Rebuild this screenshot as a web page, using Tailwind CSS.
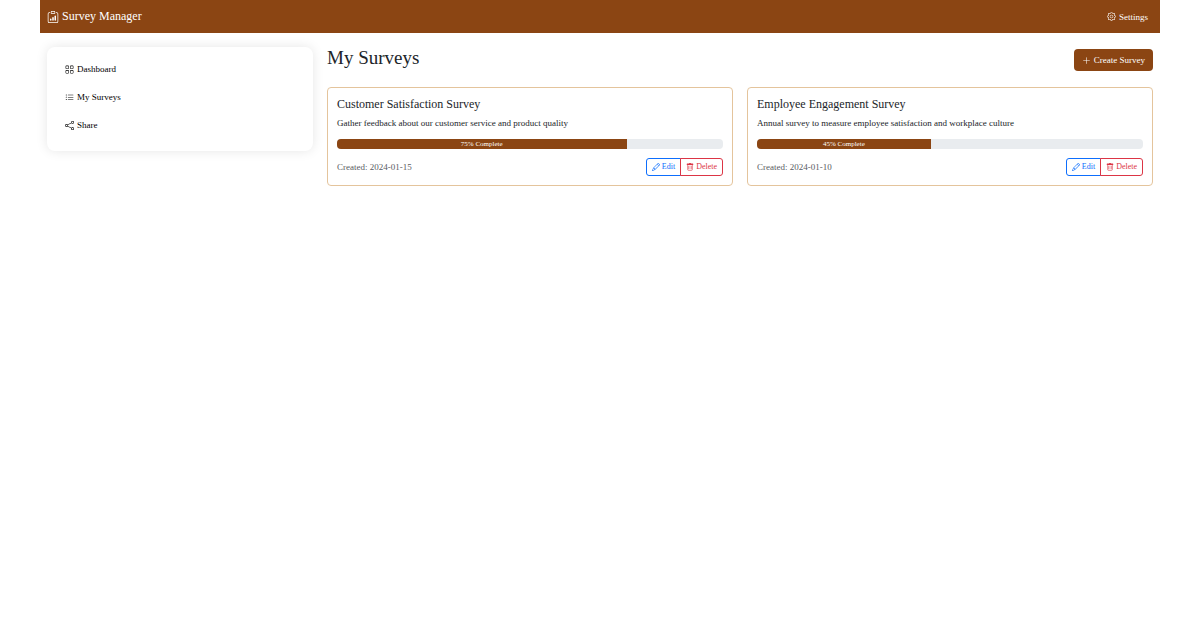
<!DOCTYPE html>
<html lang="en">
<head>
    <meta charset="UTF-8">
    <meta name="viewport" content="width=device-width, initial-scale=1.0">
    <title>Survey Manager</title>
    <script src="https://cdn.jsdelivr.net/npm/@tailwindcss/browser@4"></script>
</head>
<body class="bg-white text-[#212529] font-['Liberation_Serif',serif] text-[9px] leading-[14px]">
    <!-- Icon sprite -->
    <svg class="hidden" xmlns="http://www.w3.org/2000/svg">
        <symbol id="clipboard-data" viewBox="0 0 16 16">
            <path d="M4 11a1 1 0 1 1 2 0v1a1 1 0 1 1-2 0zm6-4a1 1 0 1 1 2 0v5a1 1 0 1 1-2 0zM7 9a1 1 0 0 1 2 0v3a1 1 0 1 1-2 0z"/>
            <path d="M4 1.500H3a2 2 0 0 0-2 2V14a2 2 0 0 0 2 2h10a2 2 0 0 0 2-2V3.500a2 2 0 0 0-2-2h-1v1h1a1 1 0 0 1 1 1V14a1 1 0 0 1-1 1H3a1 1 0 0 1-1-1V3.500a1 1 0 0 1 1-1h1z"/>
            <path d="M9.500 1a.5.5 0 0 1 .5.5v1a.5.5 0 0 1-.5.5h-3a.5.5 0 0 1-.5-.5v-1a.5.5 0 0 1 .5-.5zm-3-1A1.500 1.500 0 0 0 5 1.500v1A1.500 1.500 0 0 0 6.500 4h3A1.500 1.500 0 0 0 11 2.500v-1A1.500 1.500 0 0 0 9.500 0z"/>
        </symbol>
        <symbol id="gear" viewBox="0 0 16 16">
            <path d="M8 4.754a3.246 3.246 0 1 0 0 6.492 3.246 3.246 0 0 0 0-6.492M5.754 8a2.246 2.246 0 1 1 4.492 0 2.246 2.246 0 0 1-4.492 0"/>
            <path d="M9.796 1.343c-.527-1.790-3.065-1.790-3.592 0l-.094.319a.873.873 0 0 1-1.255.520l-.292-.160c-1.640-.892-3.433.902-2.540 2.541l.159.292a.873.873 0 0 1-.520 1.255l-.319.094c-1.790.527-1.790 3.065 0 3.592l.319.094a.873.873 0 0 1 .520 1.255l-.160.292c-.892 1.640.901 3.434 2.541 2.540l.292-.159a.873.873 0 0 1 1.255.520l.094.319c.527 1.790 3.065 1.790 3.592 0l.094-.319a.873.873 0 0 1 1.255-.520l.292.160c1.640.893 3.434-.902 2.540-2.541l-.159-.292a.873.873 0 0 1 .520-1.255l.319-.094c1.790-.527 1.790-3.065 0-3.592l-.319-.094a.873.873 0 0 1-.520-1.255l.160-.292c.893-1.640-.902-3.433-2.541-2.540l-.292.159a.873.873 0 0 1-1.255-.520zm-2.633.283c.246-.835 1.428-.835 1.674 0l.094.319a1.873 1.873 0 0 0 2.693 1.115l.291-.160c.764-.415 1.600.420 1.184 1.185l-.159.292a1.873 1.873 0 0 0 1.116 2.692l.318.094c.835.246.835 1.428 0 1.674l-.319.094a1.873 1.873 0 0 0-1.115 2.693l.160.291c.415.764-.420 1.600-1.185 1.184l-.291-.159a1.873 1.873 0 0 0-2.693 1.116l-.094.318c-.246.835-1.428.835-1.674 0l-.094-.319a1.873 1.873 0 0 0-2.692-1.115l-.292.160c-.764.415-1.600-.420-1.184-1.185l.159-.291A1.873 1.873 0 0 0 1.945 8.930l-.319-.094c-.835-.246-.835-1.428 0-1.674l.319-.094A1.873 1.873 0 0 0 3.060 4.377l-.160-.292c-.415-.764.420-1.600 1.185-1.184l.292.159a1.873 1.873 0 0 0 2.692-1.115z"/>
        </symbol>
        <symbol id="grid" viewBox="0 0 16 16">
            <path d="M1 2.500A1.500 1.500 0 0 1 2.500 1h3A1.500 1.500 0 0 1 7 2.500v3A1.500 1.500 0 0 1 5.500 7h-3A1.500 1.500 0 0 1 1 5.500zM2.500 2a.5.5 0 0 0-.5.5v3a.5.5 0 0 0 .5.5h3a.5.5 0 0 0 .5-.5v-3a.5.5 0 0 0-.5-.5zm6.500.5A1.500 1.500 0 0 1 10.500 1h3A1.500 1.500 0 0 1 15 2.500v3A1.500 1.500 0 0 1 13.500 7h-3A1.500 1.500 0 0 1 9 5.500zm1.500-.5a.5.5 0 0 0-.5.5v3a.5.5 0 0 0 .5.5h3a.5.5 0 0 0 .5-.5v-3a.5.5 0 0 0-.5-.5zM1 10.500A1.500 1.500 0 0 1 2.500 9h3A1.500 1.500 0 0 1 7 10.500v3A1.500 1.500 0 0 1 5.500 15h-3A1.500 1.500 0 0 1 1 13.500zm1.500-.5a.5.5 0 0 0-.5.5v3a.5.5 0 0 0 .5.5h3a.5.5 0 0 0 .5-.5v-3a.5.5 0 0 0-.5-.5zm6.500.5A1.500 1.500 0 0 1 10.500 9h3a1.500 1.500 0 0 1 1.500 1.500v3a1.500 1.500 0 0 1-1.500 1.500h-3A1.500 1.500 0 0 1 9 13.500zm1.500-.5a.5.5 0 0 0-.5.5v3a.5.5 0 0 0 .5.5h3a.5.5 0 0 0 .5-.5v-3a.5.5 0 0 0-.5-.5z"/>
        </symbol>
        <symbol id="list-task" viewBox="0 0 16 16">
            <path fill-rule="evenodd" d="M2 2.500a.5.5 0 0 0-.5.5v1a.5.5 0 0 0 .5.5h1a.5.5 0 0 0 .5-.5V3a.5.5 0 0 0-.5-.5zM3 3H2v1h1z"/>
            <path d="M5 3.500a.5.5 0 0 1 .5-.5h9a.5.5 0 0 1 0 1h-9a.5.5 0 0 1-.5-.5M5.500 7a.5.5 0 0 0 0 1h9a.5.5 0 0 0 0-1zm0 4a.5.5 0 0 0 0 1h9a.5.5 0 0 0 0-1z"/>
            <path fill-rule="evenodd" d="M1.500 7a.5.5 0 0 1 .5-.5h1a.5.5 0 0 1 .5.5v1a.5.5 0 0 1-.5.5H2a.5.5 0 0 1-.5-.5zM2 7h1v1H2zm0 3.500a.5.5 0 0 0-.5.5v1a.5.5 0 0 0 .5.5h1a.5.5 0 0 0 .5-.5v-1a.5.5 0 0 0-.5-.5zm1 .5H2v1h1z"/>
        </symbol>
        <symbol id="share" viewBox="0 0 16 16">
            <path d="M13.500 1a1.500 1.500 0 1 0 0 3 1.500 1.500 0 0 0 0-3M11 2.500a2.500 2.500 0 1 1 .603 1.628l-6.718 3.120a2.500 2.500 0 0 1 0 1.504l6.718 3.120a2.500 2.500 0 1 1-.488.876l-6.718-3.120a2.500 2.500 0 1 1 0-3.256l6.718-3.120A2.500 2.500 0 0 1 11 2.500m-8.500 4a1.500 1.500 0 1 0 0 3 1.500 1.500 0 0 0 0-3m11 5.500a1.500 1.500 0 1 0 0 3 1.500 1.500 0 0 0 0-3"/>
        </symbol>
        <symbol id="plus-lg" viewBox="0 0 16 16">
            <path d="M8 2a.5.5 0 0 1 .5.5v5h5a.5.5 0 0 1 0 1h-5v5a.5.5 0 0 1-1 0v-5h-5a.5.5 0 0 1 0-1h5v-5A.5.5 0 0 1 8 2"/>
        </symbol>
        <symbol id="pencil" viewBox="0 0 16 16">
            <path d="M12.146.146a.5.5 0 0 1 .708 0l3 3a.5.5 0 0 1 0 .708l-10 10a.5.5 0 0 1-.168.110l-5 2a.5.5 0 0 1-.650-.650l2-5a.5.5 0 0 1 .110-.168zM11.207 2.500 13.500 4.793 14.793 3.500 12.500 1.207zm1.586 3L10.500 3.207 4 9.707V10h.5a.5.5 0 0 1 .5.5v.5h.5a.5.5 0 0 1 .5.5v.5h.293zm-9.761 5.175-.106.106-1.528 3.821 3.821-1.528.106-.106A.5.5 0 0 1 5 12.500V12h-.5a.5.5 0 0 1-.5-.5V11h-.5a.5.5 0 0 1-.468-.325"/>
        </symbol>
        <symbol id="trash" viewBox="0 0 16 16">
            <path d="M2.500 1a1 1 0 0 0-1 1v1a1 1 0 0 0 1 1H3v9a2 2 0 0 0 2 2h6a2 2 0 0 0 2-2V4h.5a1 1 0 0 0 1-1V2a1 1 0 0 0-1-1H10a1 1 0 0 0-1-1H7a1 1 0 0 0-1 1zM4 4h8v9a1 1 0 0 1-1 1H5a1 1 0 0 1-1-1z" fill-rule="evenodd"/>
            <path d="M5.500 5a.5.5 0 0 1 .5.5v7a.5.5 0 0 1-1 0v-7a.5.5 0 0 1 .5-.5M8 5a.5.5 0 0 1 .5.5v7a.5.5 0 0 1-1 0v-7A.5.5 0 0 1 8 5m3 .5v7a.5.5 0 0 1-1 0v-7a.5.5 0 0 1 1 0"/>
        </symbol>
    </svg>

    <div class="mx-10">
        <nav class="flex items-center justify-between bg-[#8b4513] py-2 pl-[7px] pr-3 text-white">
            <a href="#" class="flex items-center gap-[3px] text-[12px] leading-[17px]">
                <svg class="size-3 fill-current"><use href="#clipboard-data"/></svg>
                Survey Manager
            </a>
            <a href="#" class="flex items-center gap-[3px]">
                <svg class="size-[9px] fill-current"><use href="#gear"/></svg>
                Settings
            </a>
        </nav>

        <div class="flex items-start gap-[14px] px-[7px] pt-[14px]">
            <!-- Sidebar -->
            <aside class="w-[266px] shrink-0 rounded-lg bg-white px-[18px] pt-2 pb-3 text-black shadow-[0_0_12px_rgba(0,0,0,0.1)]">
                <a href="#" class="flex h-7 items-center gap-[3px]">
                    <svg class="size-[9px] fill-current"><use href="#grid"/></svg>
                    Dashboard
                </a>
                <a href="#" class="flex h-7 items-center gap-[3px]">
                    <svg class="size-[9px] fill-current"><use href="#list-task"/></svg>
                    My Surveys
                </a>
                <a href="#" class="flex h-7 items-center gap-[3px]">
                    <svg class="size-[9px] fill-current"><use href="#share"/></svg>
                    Share
                </a>
            </aside>

            <!-- Survey list -->
            <main class="min-w-0 flex-1">
                <div class="mb-4 flex items-start justify-between">
                    <h1 class="text-[19px] leading-[22px]">My Surveys</h1>
                    <button type="button" class="mt-[2px] flex h-[22px] items-center gap-[3px] rounded bg-[#8b4513] px-2 text-white">
                        <svg class="size-[9px] fill-current"><use href="#plus-lg"/></svg>
                        Create Survey
                    </button>
                </div>

                <div class="grid grid-cols-2 gap-[14px]">
                    <article class="rounded border border-[#e4c49c] p-[9px]">
                        <h2 class="mb-[5px] text-[12px] leading-[14px]">Customer Satisfaction Survey</h2>
                        <p class="mb-[9px]">Gather feedback about our customer service and product quality</p>
                        <div class="mb-[9px] overflow-hidden rounded bg-[#e9ecef]">
                            <div class="bg-[#8b4513] text-center text-[7px] leading-[10px] text-white" style="width: 75%">75% Complete</div>
                        </div>
                        <div class="flex items-center justify-between">
                            <span class="text-[#595c5f]">Created: 2024-01-15</span>
                            <div class="flex text-[8px]">
                                <button type="button" class="flex h-[18px] items-center gap-[2px] rounded-l-[3px] border border-[#0d6efd] px-[5px] text-[#0d6efd]">
                                    <svg class="size-2 fill-current"><use href="#pencil"/></svg>
                                    Edit
                                </button>
                                <button type="button" class="-ml-px flex h-[18px] items-center gap-[2px] rounded-r-[3px] border border-[#dc3545] px-[5px] text-[#dc3545]">
                                    <svg class="size-2 fill-current"><use href="#trash"/></svg>
                                    Delete
                                </button>
                            </div>
                        </div>
                    </article>
                    <article class="rounded border border-[#e4c49c] p-[9px]">
                        <h2 class="mb-[5px] text-[12px] leading-[14px]">Employee Engagement Survey</h2>
                        <p class="mb-[9px]">Annual survey to measure employee satisfaction and workplace culture</p>
                        <div class="mb-[9px] overflow-hidden rounded bg-[#e9ecef]">
                            <div class="bg-[#8b4513] text-center text-[7px] leading-[10px] text-white" style="width: 45%">45% Complete</div>
                        </div>
                        <div class="flex items-center justify-between">
                            <span class="text-[#595c5f]">Created: 2024-01-10</span>
                            <div class="flex text-[8px]">
                                <button type="button" class="flex h-[18px] items-center gap-[2px] rounded-l-[3px] border border-[#0d6efd] px-[5px] text-[#0d6efd]">
                                    <svg class="size-2 fill-current"><use href="#pencil"/></svg>
                                    Edit
                                </button>
                                <button type="button" class="-ml-px flex h-[18px] items-center gap-[2px] rounded-r-[3px] border border-[#dc3545] px-[5px] text-[#dc3545]">
                                    <svg class="size-2 fill-current"><use href="#trash"/></svg>
                                    Delete
                                </button>
                            </div>
                        </div>
                    </article>
                </div>
            </main>
        </div>
    </div>
</body>
</html>
